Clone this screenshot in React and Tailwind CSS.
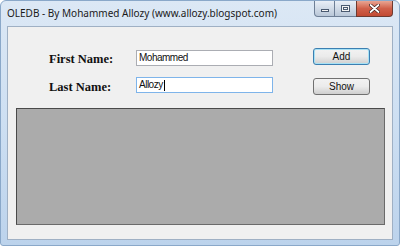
import React from "react";

export default function App() {
  return (
    <div className="w-[400px] h-[246px] overflow-hidden bg-white">
      <div className="w-[400px] h-[246px] flex flex-col rounded-t-[6px] rounded-b-[3px] border border-[#8aa8c9] bg-gradient-to-b from-[#dce8f5] via-[#cddff2] to-[#bcd3ec]">
        {/* Title bar */}
        <div className="h-[25px] flex items-start justify-between">
          <div
            className="pl-[6px] pt-[5px] text-[10px] leading-[14px] text-[#1a1a1a] whitespace-nowrap"
            style={{ fontFamily: '"Noto Sans", "Open Sans", sans-serif' }}
          >
            OLEDB - By Mohammed Allozy (www.allozy.blogspot.com)
          </div>
          <div className="flex mr-[6px] shrink-0">
            <div className="w-[21px] h-[16px] rounded-bl-[4px] border border-t-0 border-[#6e7f96] bg-gradient-to-b from-[#e9eff7] to-[#b9c7d8] flex items-center justify-center">
              <div className="w-[8px] h-[3px] mt-[4px] bg-[#f4f4f4] border border-[#4a5a70]" />
            </div>
            <div className="w-[21px] h-[16px] border-b border-[#6e7f96] bg-gradient-to-b from-[#e9eff7] to-[#b9c7d8] flex items-center justify-center">
              <div className="w-[9px] h-[7px] border border-[#4a5a70] bg-[#f4f4f4] flex items-center justify-center">
                <div className="w-[5px] h-[3px] border border-[#4a5a70]" />
              </div>
            </div>
            <div className="w-[37px] h-[16px] rounded-br-[4px] border border-t-0 border-[#6e3a30] bg-gradient-to-b from-[#e8a593] via-[#d0604a] to-[#c24a33] flex items-center justify-center">
              <svg width="11" height="9" viewBox="0 0 11 9">
                <path d="M1.5 1 L9.5 8 M9.5 1 L1.5 8" stroke="#3a1c18" strokeWidth="3.2" strokeLinecap="round" />
                <path d="M1.5 1 L9.5 8 M9.5 1 L1.5 8" stroke="#ffffff" strokeWidth="1.8" strokeLinecap="round" />
              </svg>
            </div>
          </div>
        </div>
        {/* Body */}
        <div className="flex-1 flex px-[6px] pb-[5px]">
          <div className="flex-1 flex flex-col border border-[#9fb0c4] bg-[#f0f0f0] pt-[21px] pl-[8px] pr-[7px] pb-[14px]">
            {/* Row 1 */}
            <div className="flex items-start h-[18px]">
              <div
                className="w-[120px] shrink-0 pl-[33px] pt-[4px] text-[12.5px] leading-[14px] font-bold text-[#111] whitespace-nowrap"
                style={{ fontFamily: '"Liberation Serif", serif' }}
              >
                First Name:
              </div>
              <div
                className="mt-[2px] w-[137px] shrink-0 h-[16px] border border-[#abadb3] bg-white pl-[2px] text-[10px] leading-[14px] text-[#111] tracking-[-0.5px]"
                style={{ fontFamily: '"Liberation Sans", sans-serif' }}
              >
                Mohammed
              </div>
              <div
                className="ml-[40px] w-[57px] shrink-0 h-[17px] rounded-[3px] border border-[#3c7fb1] bg-gradient-to-b from-[#f2f2f2] via-[#ebebeb] to-[#cfcfcf] shadow-[inset_0_0_0_1px_#a6e1f5] flex items-center justify-center text-[10px] text-[#111]"
                style={{ fontFamily: '"Liberation Sans", sans-serif' }}
              >
                Add
              </div>
            </div>
            {/* Row 2 */}
            <div className="flex items-start h-[18px] mt-[11px]">
              <div
                className="w-[120px] shrink-0 pl-[33px] pt-[3px] text-[12.5px] leading-[14px] font-bold text-[#111] whitespace-nowrap"
                style={{ fontFamily: '"Liberation Serif", serif' }}
              >
                Last Name:
              </div>
              <div
                className="w-[137px] shrink-0 h-[16px] border border-[#7eb4ea] bg-white pl-[2px] text-[10px] leading-[14px] text-[#111] tracking-[-0.5px] flex items-center"
                style={{ fontFamily: '"Liberation Sans", sans-serif' }}
              >
                <span>Allozy</span>
                <span className="inline-block w-[1px] h-[11px] bg-black ml-[1px]" />
              </div>
              <div
                className="ml-[40px] mt-[1px] w-[57px] shrink-0 h-[17px] rounded-[3px] border border-[#707070] bg-gradient-to-b from-[#f2f2f2] via-[#ebebeb] to-[#cfcfcf] flex items-center justify-center text-[10px] text-[#111]"
                style={{ fontFamily: '"Liberation Sans", sans-serif' }}
              >
                Show
              </div>
            </div>
            {/* Grey panel */}
            <div className="mt-[13px] flex-1 bg-[#ababab] border-t border-l border-[#4a4a4a] border-b border-r border-b-[#6a6a6a] border-r-[#6a6a6a]" />
          </div>
        </div>
      </div>
    </div>
  );
}
